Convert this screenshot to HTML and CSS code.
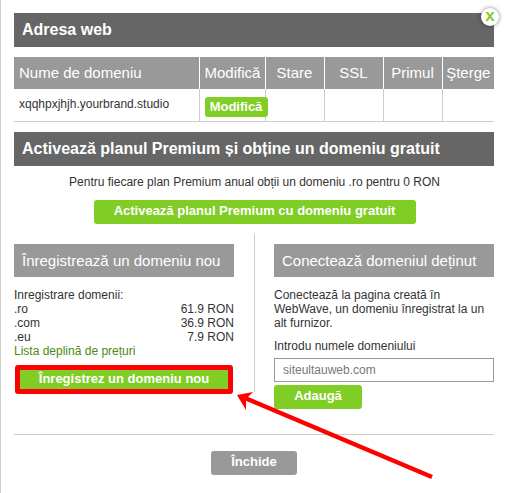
FILE: index.html
```html
<!DOCTYPE html>
<html lang="en">
<head>
  <meta charset="UTF-8">
  <meta name="viewport" content="width=device-width, initial-scale=1.0">
  <title>Adresa web</title>
  <link rel="stylesheet" href="styles.css">
</head>
<body>
  <div class="dialog">
    <a class="close-x">x</a>

    <h2 class="bar">Adresa web</h2>

    <table class="domains">
      <thead>
        <tr>
          <th class="col-name">Nume de domeniu</th>
          <th class="col-edit">Modifică</th>
          <th class="col-small">Stare</th>
          <th class="col-small">SSL</th>
          <th class="col-small">Primul</th>
          <th class="col-last">Şterge</th>
        </tr>
      </thead>
      <tbody>
        <tr>
          <td class="col-name">xqqhpxjhjh.yourbrand.studio</td>
          <td class="col-edit"><span class="btn btn-small">Modifică</span></td>
          <td></td>
          <td></td>
          <td></td>
          <td></td>
        </tr>
      </tbody>
    </table>

    <h2 class="bar bar-second">Activează planul Premium și obține un domeniu gratuit</h2>
    <p class="promo">Pentru fiecare plan Premium anual obții un domeniu .ro pentru 0 RON</p>
    <div class="promo-action">
      <span class="btn btn-promo">Activează planul Premium cu domeniu gratuit</span>
    </div>

    <div class="columns">
      <div class="col col-left">
        <h3 class="subbar">Înregistrează un domeniu nou</h3>
        <div class="prices">
          <div>Inregistrare domenii:</div>
          <div class="price"><span>.ro</span><span>61.9 RON</span></div>
          <div class="price"><span>.com</span><span>36.9 RON</span></div>
          <div class="price"><span>.eu</span><span>7.9 RON</span></div>
          <a class="price-link">Lista deplină de prețuri</a>
        </div>
        <span class="btn btn-register">Înregistrez un domeniu nou</span>
      </div>
      <div class="col col-right">
        <h3 class="subbar">Conectează domeniul deținut</h3>
        <p class="connect-text">Conectează la pagina creată în WebWave, un domeniu înregistrat la un alt furnizor.</p>
        <label class="connect-label" for="domain">Introdu numele domeniului</label>
        <input class="connect-input" id="domain" type="text" placeholder="siteultauweb.com">
        <span class="btn btn-add">Adaugă</span>
      </div>
    </div>

    <div class="footer">
      <span class="btn btn-close">Închide</span>
    </div>
  </div>

  <!-- annotation arrow -->
  <svg class="arrow" width="507" height="493" viewBox="0 0 507 493">
    <line x1="432" y1="477" x2="245" y2="398" stroke="#ff0000" stroke-width="4.5"/>
    <polygon points="237,395 253,392 246,399 246,410" fill="#ff0000"/>
  </svg>
</body>
</html>
```

FILE: styles.css
```css
* {
  font-family: "Liberation Sans", Arial, sans-serif;
  box-sizing: border-box;
}

body {
  margin: 0;
  background: #fff;
  color: #333;
  font-size: 12px;
  line-height: 14px;
}

.dialog {
  position: relative;
  width: 507px;
  height: 493px;
  padding: 13px 13px 0 14px;
  border-left: 1px solid #ccc;
  overflow: hidden;
}

/**
 * Close button
 */
.close-x {
  position: absolute;
  top: 8px;
  left: 480px;
  width: 18px;
  height: 18px;
  border-radius: 50%;
  background: #fff;
  box-shadow: 0 0 4px rgba(0, 0, 0, .5);
  color: #7fcd25;
  font-size: 17px;
  font-weight: bold;
  line-height: 15px;
  text-align: center;
}

/**
 * Headings
 */
.bar {
  margin: 0 0 10px -1px;
  width: 480px;
  height: 34px;
  padding-left: 8px;
  background: #666;
  color: #fff;
  font-size: 16px;
  font-weight: bold;
  line-height: 33px;
}

.bar-second {
  margin-top: 10px;
  margin-bottom: 0;
}

.subbar {
  margin: 0;
  height: 33px;
  padding-left: 8px;
  background: #999;
  color: #fff;
  font-size: 15px;
  font-weight: normal;
  line-height: 33px;
}

/**
 * Table
 */
.domains {
  margin-left: -1px;
  width: 480px;
  border-collapse: collapse;
  table-layout: fixed;
}

.domains th {
  height: 32px;
  padding: 0;
  background: #999;
  border-left: 1px solid #fff;
  color: #fff;
  font-size: 15px;
  font-weight: normal;
  text-align: center;
}

.domains td {
  height: 32px;
  padding: 0;
  border-left: 1px solid #ccc;
  vertical-align: top;
  font-size: 12px;
}

.domains th:first-child,
.domains td:first-child {
  border-left: 0;
}

.domains .col-name {
  width: 185px;
  padding-left: 5px;
  text-align: left;
}

.domains td.col-name {
  padding-top: 8px;
}

.domains .col-edit {
  width: 66px;
  padding-left: 5px;
  text-align: left;
  white-space: nowrap;
}

.domains .col-small {
  width: 59px;
}

.domains .col-last {
  width: 52px;
  white-space: nowrap;
}

.domains tbody {
  border-bottom: 1px solid #ccc;
}

/**
 * Buttons
 */
.btn {
  display: block;
  background: #7fcd25;
  border-radius: 3px;
  color: #fff;
  font-weight: bold;
  text-align: center;
}

.btn-small {
  width: 63px;
  height: 20px;
  margin-top: 8px;
  font-size: 13px;
  line-height: 20px;
  position: relative;
}

.promo {
  margin: 9px 0 0;
  text-align: center;
}

.promo-action {
  display: flex;
  justify-content: center;
  margin-top: 11px;
}

.btn-promo {
  width: 322px;
  height: 24px;
  font-size: 13px;
  line-height: 22px;
}

/**
 * Two columns
 */
.columns {
  display: flex;
  margin: 10px 0 0 -1px;
  width: 480px;
}

.col {
  width: 240px;
  height: 158px;
  padding-top: 10px;
}

.col-left {
  padding-right: 20px;
  border-right: 1px solid #ccc;
  width: 241px;
}

.col-right {
  padding-left: 19px;
  width: 239px;
}

.prices {
  margin-top: 11px;
}

.price {
  display: flex;
  justify-content: space-between;
}

.price-link {
  color: #4a8a10;
}

.btn-register {
  margin: 7px 1px 0;
  width: 218px;
  height: 29px;
  border: 5px solid #ff0000;
  font-size: 13px;
  line-height: 18px;
}

.connect-text {
  margin: 11px 0 0;
}

.connect-label {
  display: block;
  margin-top: 9px;
}

.connect-input {
  display: block;
  width: 220px;
  height: 24px;
  margin-top: 5px;
  padding: 0 8px;
  border: 1px solid #999;
  font-size: 12px;
  color: #333;
}

.connect-input::placeholder {
  color: #777;
}

.btn-add {
  width: 88px;
  height: 24px;
  margin-top: 3px;
  font-size: 13px;
  line-height: 22px;
}

/**
 * Footer
 */
.footer {
  margin: 0 0 0 -1px;
  width: 480px;
  padding-top: 16px;
  border-top: 1px solid #ccc;
  margin-top: 42px;
}

.btn-close {
  margin-left: 197px;
  width: 86px;
  height: 24px;
  background: #999;
  font-size: 13px;
  line-height: 22px;
}

.arrow {
  position: absolute;
  top: 0;
  left: 0;
  pointer-events: none;
}
```
